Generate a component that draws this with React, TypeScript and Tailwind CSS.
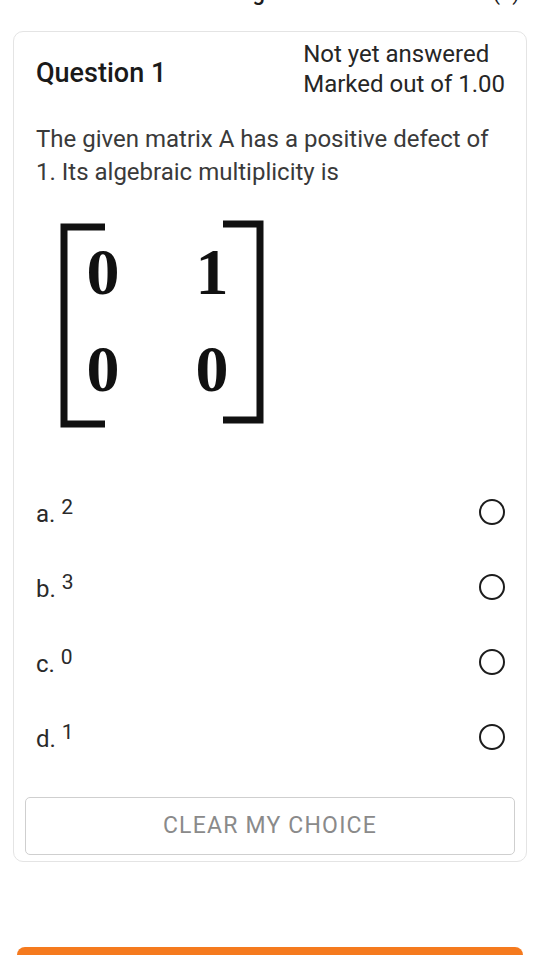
export default function App() {
  const options = [
    { label: "a.", value: "2" },
    { label: "b.", value: "3" },
    { label: "c.", value: "0" },
    { label: "d.", value: "1" },
  ];

  return (
    <div className="w-[540px] h-[955px] bg-white overflow-hidden font-['Roboto',sans-serif] text-[#1d1d1d]">
      {/* clipped page title above the card */}
      <div className="h-[6px] overflow-hidden relative">
        <div className="flex justify-between pl-[110px] pr-[20px] -mt-[20px] text-[22px] leading-[26px]">
          <span className="font-medium">Final Assessing</span>
          <span>(1)</span>
        </div>
      </div>

      <div className="h-[25px]"></div>

      {/* question card */}
      <div className="mx-[13px] h-[831px] border border-[#e4e4e4] rounded-[10px] flex flex-col">
        <div className="flex justify-between items-start pl-[22px] pr-[21px] pt-[7px]">
          <h3 className="text-[27px] font-medium leading-[30px] mt-[19px] text-[#1a1a1a]">Question 1</h3>
          <div className="text-[24px] leading-[30px] text-[#262626]">
            <div>Not yet answered</div>
            <div>Marked out of 1.00</div>
          </div>
        </div>

        <p className="px-[22px] mt-[24px] text-[24px] leading-[33px] text-[#3a3a3a]">
          The given matrix A has a positive defect of 1. Its algebraic multiplicity is
        </p>

        {/* matrix (an image in the original) */}
        <svg width="220" height="210" viewBox="0 0 220 210" className="ml-[45px] mt-[30px]">
          <path d="M46 8 H5 V205 H46" fill="none" stroke="#111" strokeWidth="7" />
          <path d="M164 5 H201 V201 H164" fill="none" stroke="#111" strokeWidth="7" />
          <g fontFamily="'Liberation Serif', serif" fontWeight="bold" fontSize="66" fill="#111" textAnchor="middle">
            <text x="44" y="75">0</text>
            <text x="153" y="75">1</text>
            <text x="44" y="172">0</text>
            <text x="153" y="172">0</text>
          </g>
        </svg>

        <div className="mt-[45px] flex flex-col">
          {options.map((o) => (
            <div key={o.label} className="h-[75px] flex items-center justify-between pl-[22px] pr-[21px]">
              <div className="text-[24px] text-[#2a2a2a] leading-none">
                <span>{o.label}</span>{" "}
                <span className="text-[21px] align-[8px]">{o.value}</span>
              </div>
              <span className="w-[26px] h-[26px] rounded-full border-[2.5px] border-[#1c1c1c]"></span>
            </div>
          ))}
        </div>

        <button className="mx-[11px] mt-[23px] h-[58px] border border-[#cfcfcf] rounded-[5px] text-[23px] tracking-[1.2px] text-[#8a8a8a]">
          CLEAR MY CHOICE
        </button>
      </div>

      <div className="h-[85px]"></div>
      <div className="mx-[17px] h-[20px] rounded-t-[8px] bg-[#f57a1e]"></div>
    </div>
  );
}
